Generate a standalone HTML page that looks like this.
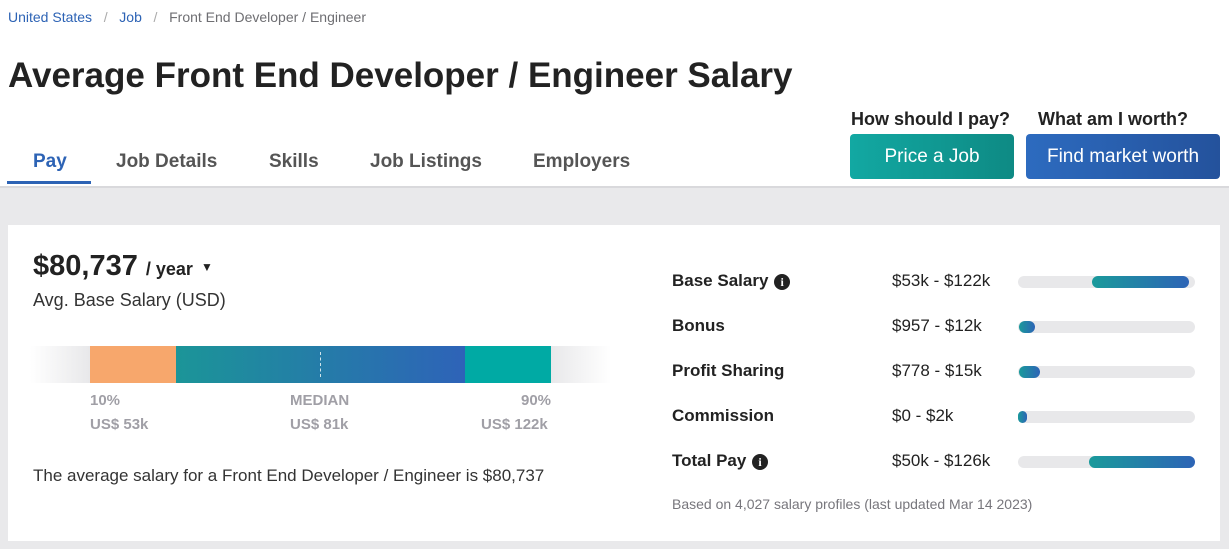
<!DOCTYPE html>
<html><head><meta charset="utf-8"><style>
*{margin:0;padding:0;box-sizing:border-box}
body{width:1229px;height:549px;overflow:hidden;font-family:"Liberation Sans",sans-serif;background:#fff;color:#2b2b2b;position:relative}
.a{position:absolute;white-space:nowrap}
.crumb{top:9px;font-size:14px;color:#6e6e72}
.crumb b{font-weight:normal;color:#2d63b5}
h1{position:absolute;left:8px;top:56px;font-size:35px;font-weight:bold;color:#222;letter-spacing:0}
.tab{top:151px;font-size:19px;font-weight:bold;color:#555}
.btn{top:134px;height:45px;border-radius:4px;color:#fff;font-size:19px;display:flex;align-items:center;justify-content:center}
.gray{position:absolute;left:0;top:186px;width:1229px;height:363px;background:#e9e9eb;border-top:2px solid #d9d9dc}
.card{position:absolute;left:8px;top:225px;width:1212px;height:316px;background:#fff}
.lbl{font-size:15px;font-weight:bold;color:#a09fa6}
.rl{font-size:17px;font-weight:bold;color:#222}
.rv{font-size:17px;color:#222;left:892px}
.tr{left:1018px;width:177px;height:12px;border-radius:6px;background:#e8e8ea}
.f{position:absolute;top:0;height:12px;border-radius:6px;background:linear-gradient(90deg,#1a9a9b,#2d64b6)}
.i{display:inline-block;width:16px;height:16px;border-radius:50%;background:#222;color:#fff;font-size:12px;text-align:center;line-height:16px;font-family:"Liberation Serif",serif;font-weight:bold;vertical-align:0;margin-left:1px}
</style></head><body>
<div class="a crumb" style="left:8px"><b>United States</b> &nbsp;&nbsp;<span style="color:#aaa">/</span>&nbsp;&nbsp; <b>Job</b> &nbsp;&nbsp;<span style="color:#aaa">/</span>&nbsp;&nbsp; Front End Developer / Engineer</div>
<h1>Average Front End Developer / Engineer Salary</h1>
<div class="a tab" style="left:33px;color:#2d63b5">Pay</div>
<div class="a" style="left:7px;top:181px;width:84px;height:3px;background:#2d63b5"></div>
<div class="a tab" style="left:116px">Job Details</div>
<div class="a tab" style="left:269px">Skills</div>
<div class="a tab" style="left:370px">Job Listings</div>
<div class="a tab" style="left:533px">Employers</div>
<div class="a" style="left:851px;top:109px;font-size:18px;font-weight:bold;color:#222">How should I pay?</div>
<div class="a" style="left:1038px;top:109px;font-size:18px;font-weight:bold;color:#222">What am I worth?</div>
<div class="a btn" style="left:850px;width:164px;background:linear-gradient(90deg,#12a8a2,#0e8a84)">Price a Job</div>
<div class="a btn" style="left:1026px;width:194px;background:linear-gradient(90deg,#2d6bbf,#24529c)">Find market worth</div>
<div class="gray"></div>
<div class="card"></div>
<div class="a" style="left:33px;top:250px;font-size:29px;font-weight:bold;color:#222">$80,737 <span style="font-size:18px">/ year</span> <span style="font-size:12px;vertical-align:4px">&#9660;</span></div>
<div class="a" style="left:33px;top:290px;font-size:18px;color:#333">Avg. Base Salary (USD)</div>
<div class="a" style="left:30px;top:346px;width:60px;height:37px;background:linear-gradient(90deg,#fff,#e8e8ea)"></div>
<div class="a" style="left:90px;top:346px;width:86px;height:37px;background:#f7a76c"></div>
<div class="a" style="left:176px;top:346px;width:289px;height:37px;background:linear-gradient(90deg,#1b9598,#2e63b8)"></div>
<div class="a" style="left:320px;top:352px;height:25px;border-left:1px dashed #cfe3ea"></div>
<div class="a" style="left:465px;top:346px;width:86px;height:37px;background:#00aaa4"></div>
<div class="a" style="left:551px;top:346px;width:60px;height:37px;background:linear-gradient(90deg,#e8e8ea,#fff)"></div>
<div class="a lbl" style="left:90px;top:392px">10%</div>
<div class="a lbl" style="left:90px;top:416px">US$ 53k</div>
<div class="a lbl" style="left:290px;top:392px">MEDIAN</div>
<div class="a lbl" style="left:290px;top:416px">US$ 81k</div>
<div class="a lbl" style="left:521px;top:392px">90%</div>
<div class="a lbl" style="left:481px;top:416px">US$ 122k</div>
<div class="a" style="left:33px;top:466px;font-size:17px;color:#333">The average salary for a Front End Developer / Engineer is $80,737</div>

<div class="a rl" style="left:672px;top:271px">Base Salary <span class="i">i</span></div>
<div class="a rv" style="top:271px">$53k - $122k</div>
<div class="a tr" style="top:276px"><div class="f" style="left:74px;width:97px"></div></div>
<div class="a rl" style="left:672px;top:316px">Bonus</div>
<div class="a rv" style="top:316px">$957 - $12k</div>
<div class="a tr" style="top:321px"><div class="f" style="left:1px;width:16px"></div></div>
<div class="a rl" style="left:672px;top:361px">Profit Sharing</div>
<div class="a rv" style="top:361px">$778 - $15k</div>
<div class="a tr" style="top:366px"><div class="f" style="left:1px;width:21px"></div></div>
<div class="a rl" style="left:672px;top:406px">Commission</div>
<div class="a rv" style="top:406px">$0 - $2k</div>
<div class="a tr" style="top:411px"><div class="f" style="left:0;width:9px"></div></div>
<div class="a rl" style="left:672px;top:451px">Total Pay <span class="i">i</span></div>
<div class="a rv" style="top:451px">$50k - $126k</div>
<div class="a tr" style="top:456px"><div class="f" style="left:71px;width:106px"></div></div>
<div class="a" style="left:672px;top:496px;font-size:14px;color:#77767c">Based on 4,027 salary profiles (last updated Mar 14 2023)</div>
</body></html>
